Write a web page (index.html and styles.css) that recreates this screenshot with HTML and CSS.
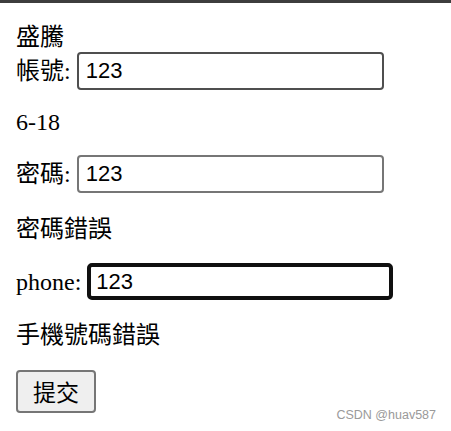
FILE: index.html
```html
<!DOCTYPE html>
<html lang="zh-Hant">
<head>
<meta charset="utf-8">
<title>盛騰</title>
<link rel="stylesheet" href="styles.css">
</head>
<body>
<div class="topbar"></div>
<div class="page">
  <div class="title line">盛騰</div>
  <div class="row row-account">
    <span class="label line">帳號:</span>
    <input class="field field-hover" type="text" value="123">
  </div>
  <div class="hint line">6-18</div>
  <div class="row row-password">
    <span class="label line">密碼:</span>
    <input class="field" type="text" value="123">
  </div>
  <div class="error error-password line">密碼錯誤</div>
  <div class="row row-phone">
    <span class="label line">phone:</span>
    <input class="field field-focus" type="text" value="123">
  </div>
  <div class="error error-phone line">手機號碼錯誤</div>
  <button class="submit" type="button">提交</button>
</div>
<div class="watermark">CSDN @huav587</div>
</body>
</html>
```

FILE: styles.css
```css
html, body {
  margin: 0;
  padding: 0;
  background: #ffffff;
}

body {
  width: 451px;
  height: 431px;
  position: relative;
  overflow: hidden;
  font-family: "Liberation Serif", "Noto Sans CJK TC", serif;
  font-size: 24px;
  color: #000000;
}

.topbar {
  height: 3px;
  background: #3d3d3d;
}

.page {
  display: flex;
  flex-direction: column;
  align-items: flex-start;
  padding: 0 16px;
}

.line {
  line-height: 28px;
  height: 28px;
  white-space: nowrap;
}

.title {
  margin-top: 20px;
}

.row {
  display: flex;
  align-items: center;
  gap: 6px;
}

.row-account {
  margin-top: 1px;
}

.hint {
  margin-top: 18px;
}

.row-password {
  margin-top: 19px;
}

.error-password {
  margin-top: 22px;
}

.row-phone {
  margin-top: 20px;
  gap: 6px;
}

.error-phone {
  margin-top: 21px;
}

.field {
  box-sizing: border-box;
  width: 307px;
  height: 38px;
  margin: 0;
  padding: 0 0 0 7px;
  border: 2px solid #767676;
  border-radius: 4px;
  background: #ffffff;
  font-family: "Liberation Sans", Arial, sans-serif;
  font-size: 22px;
  color: #000000;
  outline: none;
}

.field-hover {
  border-color: #4f4f4f;
}

.field-focus {
  width: 306px;
  height: 37px;
  padding-left: 5px;
  border: 4px solid #101010;
  border-radius: 5px;
}

.submit {
  box-sizing: border-box;
  margin-top: 21px;
  width: 80px;
  height: 43px;
  padding: 0;
  border: 2px solid #767676;
  border-radius: 4px;
  background: #efefef;
  font-family: "Noto Sans CJK TC", sans-serif;
  font-size: 23px;
  line-height: 1;
  color: #000000;
}

.watermark {
  position: absolute;
  right: 15px;
  top: 407px;
  font-family: "Liberation Sans", Arial, sans-serif;
  font-size: 12.5px;
  line-height: 16px;
  color: #9a9a9a;
}
```
